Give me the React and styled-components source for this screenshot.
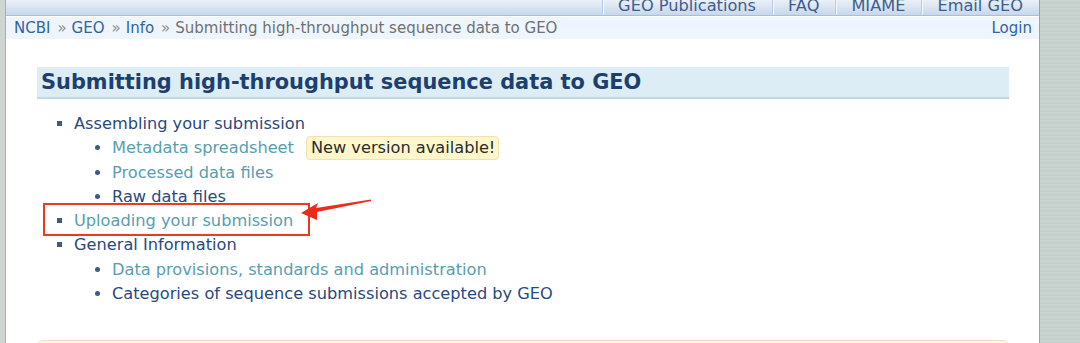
import React from "react";
import styled, { createGlobalStyle } from "styled-components";

const GlobalStyle = createGlobalStyle`
  html, body {
    margin: 0;
    padding: 0;
    background: #ffffff;
    overflow: hidden;
  }
  body {
    font-family: "DejaVu Sans", Verdana, sans-serif;
  }
`;

const Page = styled.div`
  display: flex;
  width: 1080px;
  height: 343px;
  overflow: hidden;
`;

const LeftStrip = styled.div`
  width: 5px;
  flex: none;
  background: #cfd5cf;
  border-right: 1px solid #a9b0a9;
`;

const RightGutter = styled.div`
  flex: 1;
  background: repeating-linear-gradient(
    to bottom,
    #c9d3cf 0px,
    #c9d3cf 2px,
    #c4cfcb 2px,
    #c4cfcb 4px
  );
  border-left: 1px solid #9aa3a0;
`;

const Main = styled.div`
  width: 1033px;
  flex: none;
  display: flex;
  flex-direction: column;
  background: #ffffff;
  & > * {
    flex: none;
  }
`;

const TopNav = styled.nav`
  height: 15px;
  display: flex;
  justify-content: flex-end;
  align-items: flex-end;
  overflow: hidden;
  background: linear-gradient(to bottom, #eaf0f8, #c8d7eb);
  border-bottom: 1px solid #a8bedb;
`;

const Tab = styled.a`
  display: block;
  padding: 0 16px 0 15px;
  line-height: 20px;
  margin-bottom: -1px;
  font-size: 16.2px;
  color: #3d5d8d;
  text-decoration: none;
  white-space: nowrap;
  border-left: 1px solid #b6cbe6;
  box-shadow: inset 1px 0 0 #f4f8fd;
`;

const Crumbs = styled.div`
  height: 22px;
  margin-top: 1px;
  display: flex;
  align-items: center;
  justify-content: space-between;
  padding: 0 7px 0 8px;
  background: #eef5fd;
  font-size: 15px;
  color: #707070;
`;

const CrumbLink = styled.a`
  color: #2f64a3;
  text-decoration: none;
`;

const Sep = styled.span`
  color: #8a8a8a;
  margin: 0 5px 0 7px;
`;

const Content = styled.div`
  padding: 28px 30px 0 31px;
  display: flex;
  flex-direction: column;
`;

const TitleBar = styled.h1`
  margin: 0;
  height: 29px;
  padding: 1px 0 0 4px;
  background: #dcedf5;
  border-bottom: 2px solid #c2d6e4;
  font-size: 20.9px;
  line-height: 29px;
  font-weight: bold;
  color: #1d3f6f;
  white-space: nowrap;
`;

const List = styled.ul`
  margin: 13px 0 0 0;
  padding: 0 0 0 37px;
  list-style: square;
  font-size: 16.2px;
  line-height: 24.3px;
  color: #29497f;

  & li::marker {
    color: #3a5a8c;
  }
`;

const SubList = styled.ul`
  margin: 0;
  padding: 0 0 0 38px;
  list-style: disc;
`;

const Item = styled.li`
  color: ${(p) => (p.$link ? "#579eb0" : "#29497f")};
`;

const Badge = styled.span`
  display: inline-block;
  margin-left: 12px;
  padding: 0 3px 0 4px;
  line-height: 22px;
  background: #fff7cc;
  border: 1px solid #f3dfb0;
  border-radius: 4px;
  color: #2b2b2b;
`;

const Marked = styled.span`
  position: relative;

  &::before {
    content: "";
    position: absolute;
    left: -31px;
    right: -17px;
    top: -8px;
    bottom: -6px;
    border: 2px solid #ea3a1f;
  }
`;

const Arrow = styled.svg`
  position: absolute;
  left: calc(100% + 8px);
  top: -12px;
  overflow: visible;
`;

const Notice = styled.div`
  margin-top: 34px;
  height: 20px;
  background: #fff9d8;
  border: 1px solid #f6d9d2;
  border-radius: 6px;
`;

const App = () => {
  return (
    <>
      <GlobalStyle />
      <Page>
        <LeftStrip />
        <Main>
          <TopNav>
            <Tab href="#">GEO Publications</Tab>
            <Tab href="#">FAQ</Tab>
            <Tab href="#">MIAME</Tab>
            <Tab href="#">Email GEO</Tab>
          </TopNav>
          <Crumbs>
            <span>
              <CrumbLink href="#">NCBI</CrumbLink>
              <Sep>»</Sep>
              <CrumbLink href="#">GEO</CrumbLink>
              <Sep>»</Sep>
              <CrumbLink href="#">Info</CrumbLink>
              <Sep>»</Sep>
              Submitting high-throughput sequence data to GEO
            </span>
            <CrumbLink href="#">Login</CrumbLink>
          </Crumbs>
          <Content>
            <TitleBar>Submitting high-throughput sequence data to GEO</TitleBar>
            <List>
              <Item>
                Assembling your submission
                <SubList>
                  <Item $link>
                    Metadata spreadsheet
                    <Badge>New version available!</Badge>
                  </Item>
                  <Item $link>Processed data files</Item>
                  <Item>Raw data files</Item>
                </SubList>
              </Item>
              <Item $link>
                <Marked>
                  Uploading your submission
                  <Arrow width="70" height="24" viewBox="0 0 70 24">
                    <path
                      d="M0 14 L17 4 L15 9 L70 0.5 L70 2 L16 13 L16 21 Z"
                      fill="#ee2a1a"
                    />
                  </Arrow>
                </Marked>
              </Item>
              <Item>
                General Information
                <SubList>
                  <Item $link>Data provisions, standards and administration</Item>
                  <Item>Categories of sequence submissions accepted by GEO</Item>
                </SubList>
              </Item>
            </List>
            <Notice />
          </Content>
        </Main>
        <RightGutter />
      </Page>
    </>
  );
};

export default App;
